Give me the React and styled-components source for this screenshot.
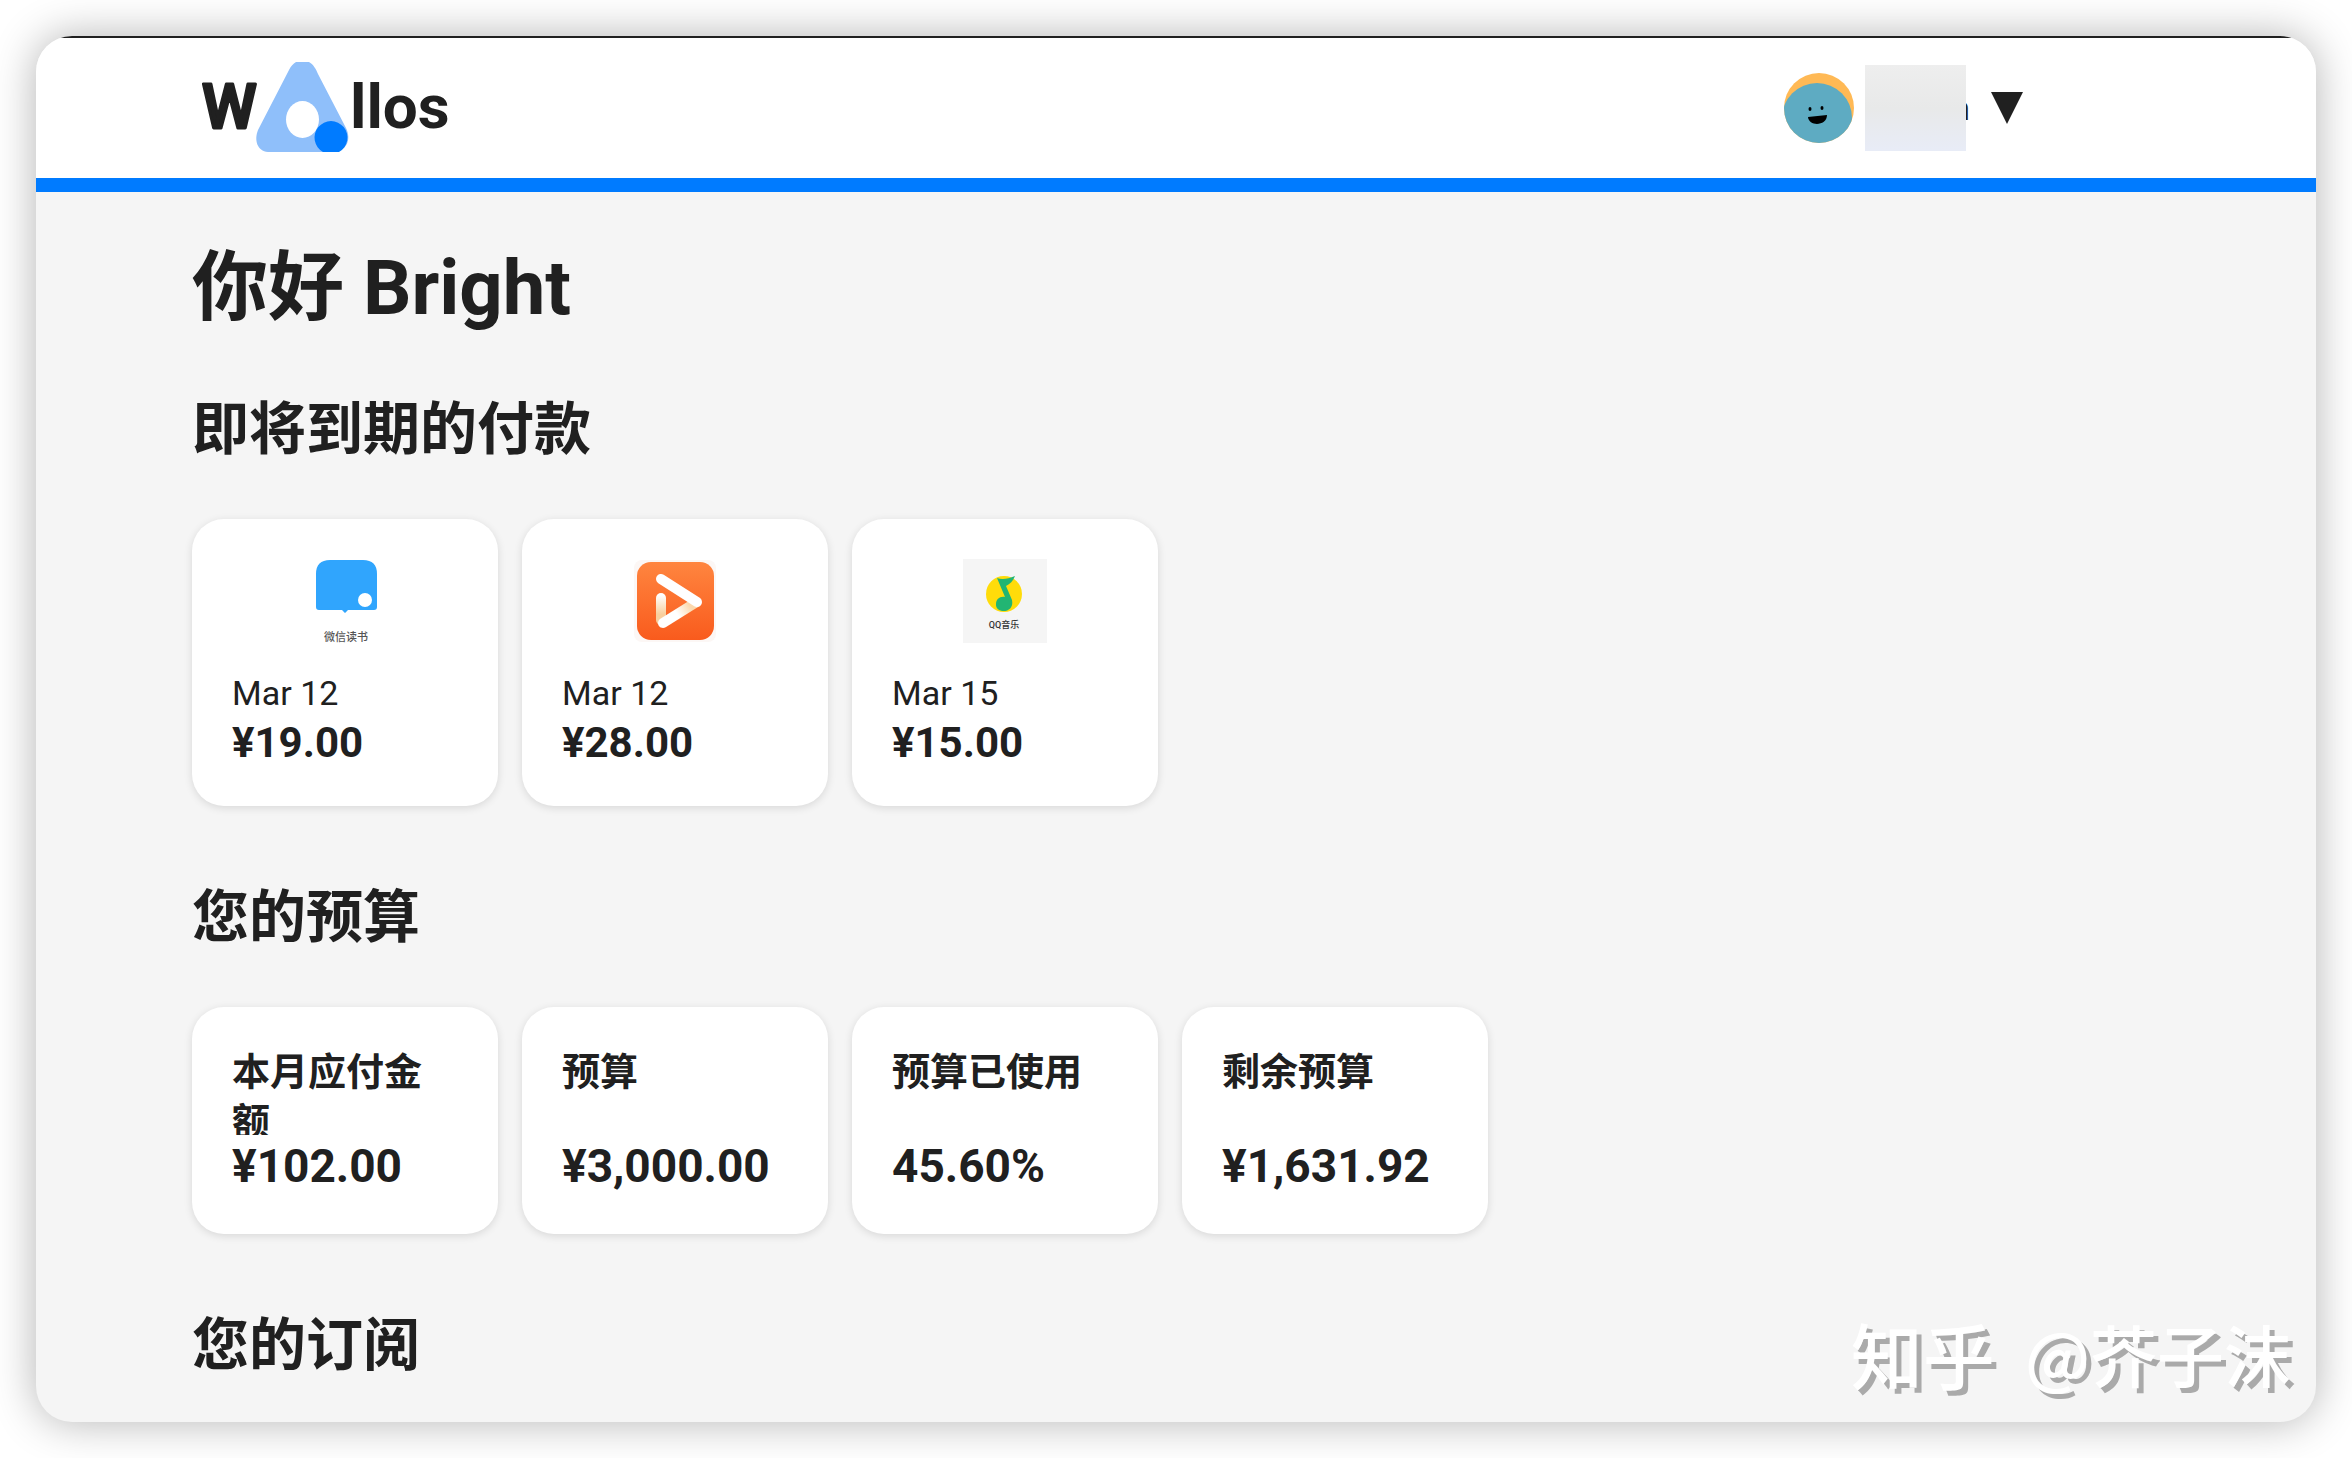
import styled, { createGlobalStyle } from "styled-components";

const GlobalStyle = createGlobalStyle`
  * {
    box-sizing: border-box;
  }
  body {
    margin: 0;
    background: #fff;
    color: #202020;
    font-family: Roboto, "Noto Sans CJK SC", sans-serif;
  }
`;

const Window = styled.div`
  position: relative;
  margin: 36px;
  border-radius: 36px;
  overflow: hidden;
  background: #f5f5f5;
  box-shadow: 0 0 44px rgba(0, 0, 0, 0.3);
`;

const Header = styled.header`
  display: flex;
  align-items: center;
  justify-content: space-between;
  height: 156px;
  padding: 0 293px 0 156px;
  background: #fff;
  border-top: 2px solid #202020;
  border-bottom: 14px solid #007bff;
`;

const LogoLink = styled.a`
  display: flex;
  color: #202020;
`;

const UserButton = styled.button`
  display: flex;
  align-items: center;
  gap: 11px;
  padding: 0;
  border: none;
  background: none;
  color: #202020;
  font-family: inherit;
  font-size: 34px;
`;

const UserName = styled.span`
  position: relative;
  width: 105px;
  height: 86px;
  line-height: 86px;
  text-align: right;

  &::after {
    content: "";
    position: absolute;
    inset: 0 4px 0 0;
    background: linear-gradient(#eeeeee, #e8e9e9 50%, #e8ecf7);
  }
`;

const Caret = styled.svg`
  margin-left: 10px;
`;

const Main = styled.main`
  padding: 50px 156px 41px;
`;

const Title = styled.h1`
  margin: 0;
  font-size: 76px;
  line-height: 92px;
  font-weight: 700;
`;

const Section = styled.section`
  margin-top: ${(props) => (props.$first ? "61px" : "77px")};
`;

const SectionTitle = styled.h2`
  margin: 0;
  font-size: 57px;
  line-height: 70px;
  font-weight: 600;
`;

const Cards = styled.div`
  display: flex;
  flex-wrap: wrap;
  gap: 24px;
  margin-top: 54px;
`;

const Card = styled.article`
  width: 306px;
  padding: 40px 40px 37px;
  border-radius: 32px;
  background: #fff;
  box-shadow: 0 2px 8px rgba(0, 0, 0, 0.12);
`;

const Logo = styled.svg`
  display: block;
  margin: 0 auto 26px;
`;

const DueDate = styled.p`
  margin: 0;
  font-size: 34px;
  line-height: 48px;
`;

const Amount = styled.p`
  margin: 0;
  font-size: 42px;
  line-height: 52px;
  font-weight: 700;
`;

const StatLabel = styled.h3`
  height: 88px;
  margin: 0;
  overflow: hidden;
  font-size: 38px;
  line-height: 50px;
  font-weight: 600;
`;

const StatValue = styled.p`
  margin: 2px 0;
  font-size: 46px;
  line-height: 58px;
  font-weight: 700;
`;

const Watermark = styled.div`
  position: absolute;
  right: 25px;
  bottom: 23px;
  display: flex;
  align-items: center;
  gap: 30px;
  color: #fff;
  font-family: "Noto Sans CJK SC", sans-serif;
  font-size: 67px;
  line-height: 92px;
  font-weight: 500;
  text-shadow: 5px 5px 0 #aaa;
`;

const Site = styled.span`
  font-size: 72px;
`;

const WallosLogo = () => (
  <svg width="260" height="96" viewBox="0 0 260 96" fill="#202020">
    <text x="10" y="68" fontSize="62" fontWeight="500" stroke="#202020" strokeWidth="3" strokeLinejoin="round">
      W
    </text>
    <path
      d="M104 2h13c4 2 7 7 9 12l28 54c6 12 0 24-13 24H76c-11-1-14-12-10-22l31-60c2-4 4-6 7-8z"
      fill="#8fbffa"
    />
    <ellipse cx="110.500" cy="59.500" rx="16.500" ry="18.500" fill="#fff" />
    <path d="M131 92a16.500 16.500 0 1 1 16 0z" fill="#007bff" />
    <text x="158" y="68" fontSize="62" fontWeight="700">
      llos
    </text>
  </svg>
);

const Avatar = () => (
  <svg width="70" height="70" viewBox="0 0 70 70">
    <clipPath id="face">
      <circle cx="35" cy="35" r="35" />
    </clipPath>
    <g clipPath="url(#face)">
      <rect width="70" height="70" fill="#ffb955" />
      <circle cx="33" cy="45" r="35" fill="#5eabc2" />
    </g>
    <ellipse cx="26" cy="36" rx="1.500" ry="2" />
    <ellipse cx="38" cy="35" rx="1.500" ry="2" />
    <path d="M24 44l19-2c0 11-18 12-19 2z" />
  </svg>
);

const WeReadLogo = () => (
  <Logo width="84" height="84" viewBox="0 0 84 84">
    <path
      d="M27 1h33q14 0 14 14v33q0 3-3 3H45l-3 3-3-3H16q-3 0-3-3V15Q13 1 27 1z"
      fill="#30a5fd"
    />
    <circle cx="62" cy="41" r="7" fill="#fff" />
    <text x="43" y="82" fontSize="11" fontWeight="500" fill="#555" textAnchor="middle">
      微信读书
    </text>
  </Logo>
);

const VideoLogo = () => (
  <Logo width="84" height="84" viewBox="0 0 84 84" fill="none">
    <defs>
      <linearGradient id="orange" x1="0" y1="0" x2="0" y2="1">
        <stop offset="0" stopColor="#ff853f" />
        <stop offset="1" stopColor="#f95b1d" />
      </linearGradient>
      <linearGradient id="fold" x1="31" y1="63" x2="63" y2="42" gradientUnits="userSpaceOnUse">
        <stop offset="0" stopColor="#fff" />
        <stop offset="0.400" stopColor="#fff" />
        <stop offset="0.800" stopColor="#fbd9ae" />
      </linearGradient>
      <linearGradient id="stem" x1="0" y1="36" x2="0" y2="60" gradientUnits="userSpaceOnUse">
        <stop offset="0" stopColor="#fff" />
        <stop offset="0.800" stopColor="#f8cf9e" />
      </linearGradient>
    </defs>
    <rect x="1" y="1" width="82" height="82" rx="8" fill="#fcf7f5" />
    <rect x="4" y="3" width="77" height="78" rx="14" fill="url(#orange)" />
    <g strokeWidth="10" strokeLinecap="round">
      <path d="M28 39v22" stroke="url(#stem)" />
      <path d="M30 64L62 44" stroke="url(#fold)" />
      <path d="M28 20l36 23" stroke="#fff" />
    </g>
  </Logo>
);

const QQMusicLogo = () => (
  <Logo width="84" height="84" viewBox="0 0 84 84">
    <rect width="84" height="84" fill="#f5f5f5" />
    <circle cx="41" cy="35" r="18" fill="#ffdc0a" />
    <path
      d="M34 19c5 2 11 1 18-2-2 5-5 8-9 10l6 14c3 14-17 14-16 4 0-5 4-8 9-7l-8-19z"
      fill="#22b573"
    />
    <text x="41" y="69" fontSize="9" fontWeight="500" fill="#333" textAnchor="middle">
      QQ音乐
    </text>
  </Logo>
);

const payments = [
  { logo: <WeReadLogo />, date: "Mar 12", amount: "¥19.00" },
  { logo: <VideoLogo />, date: "Mar 12", amount: "¥28.00" },
  { logo: <QQMusicLogo />, date: "Mar 15", amount: "¥15.00" },
];

const budget = [
  { label: "本月应付金额", value: "¥102.00" },
  { label: "预算", value: "¥3,000.00" },
  { label: "预算已使用", value: "45.60%" },
  { label: "剩余预算", value: "¥1,631.92" },
];

const App = () => {
  return (
    <>
      <GlobalStyle />
      <Window>
        <Header>
          <LogoLink href="#" aria-label="Wallos">
            <WallosLogo />
          </LogoLink>
          <UserButton type="button">
            <Avatar />
            <UserName>n</UserName>
            <Caret width="32" height="32" viewBox="0 0 32 32" fill="#202020">
              <path d="M0 0h32L16 32z" />
            </Caret>
          </UserButton>
        </Header>
        <Main>
          <Title>你好 Bright</Title>
          <Section $first>
            <SectionTitle>即将到期的付款</SectionTitle>
            <Cards>
              {payments.map((item, i) => (
                <Card key={i}>
                  {item.logo}
                  <DueDate>{item.date}</DueDate>
                  <Amount>{item.amount}</Amount>
                </Card>
              ))}
            </Cards>
          </Section>
          <Section>
            <SectionTitle>您的预算</SectionTitle>
            <Cards>
              {budget.map((item) => (
                <Card key={item.label}>
                  <StatLabel>{item.label}</StatLabel>
                  <StatValue>{item.value}</StatValue>
                </Card>
              ))}
            </Cards>
          </Section>
          <Section>
            <SectionTitle>您的订阅</SectionTitle>
          </Section>
        </Main>
        <Watermark>
          <Site>知乎</Site>
          <span>@芥子沫</span>
        </Watermark>
      </Window>
    </>
  );
};

export default App;
